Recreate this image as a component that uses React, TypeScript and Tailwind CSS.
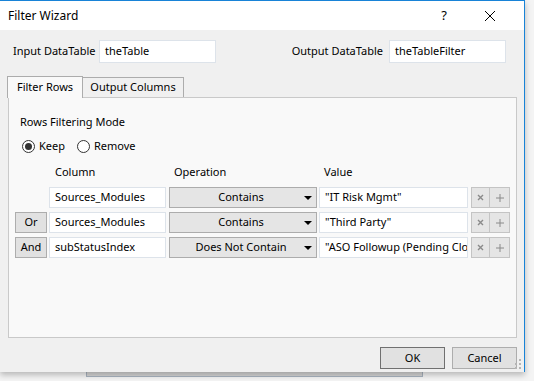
import React from 'react';

type Rule = {
  joiner?: string;
  column: string;
  operation: string;
  value: string;
};

const rules: Rule[] = [
  { column: 'Sources_Modules', operation: 'Contains', value: '"IT Risk Mgmt"' },
  { joiner: 'Or', column: 'Sources_Modules', operation: 'Contains', value: '"Third Party"' },
  { joiner: 'And', column: 'subStatusIndex', operation: 'Does Not Contain', value: '"ASO Followup (Pending Closure)"' },
];

function Radio({ checked, label }: { checked: boolean; label: string }) {
  return (
    <label className="flex items-center gap-[4px]">
      <span className="w-[13px] h-[13px] rounded-full border border-[#333] bg-white flex items-center justify-center">
        {checked && <span className="w-[7px] h-[7px] rounded-full bg-[#333]" />}
      </span>
      <span>{label}</span>
    </label>
  );
}

export default function App() {
  const [mode, setMode] = React.useState('keep');

  return (
    <div className="w-[534px] h-[381px] bg-[#f4f4f4] relative overflow-hidden text-[11px] text-black whitespace-nowrap" style={{ fontFamily: '"Segoe UI", "Noto Sans", sans-serif' }}>
      {/* window behind the dialog */}
      <div className="absolute left-[86px] top-[360px] w-[337px] h-[17px] bg-[#d6d6d6] border border-[#a9b3bf]" />

      <div className="absolute left-0 top-0 w-[525px] h-[372px] flex flex-col bg-[#f0f0f0] border-t border-r border-[#1883d7] shadow-[0_3px_6px_rgba(0,0,0,0.25)]">
        {/* title bar */}
        <div className="h-[29px] bg-white flex items-center pl-[8px] shrink-0 text-[12px]">
          <span className="flex-1">Filter Wizard</span>
          <span className="w-[20px] text-center mr-[30px] text-[13px]">?</span>
          <svg width="12" height="12" viewBox="0 0 12 12" className="mr-[28px]">
            <path d="M1 1 L11 11 M11 1 L1 11" stroke="#000" strokeWidth="1" />
          </svg>
        </div>

        {/* table names */}
        <div className="flex items-center h-[23px] mt-[10px] pl-[13px] pr-[18px]">
          <span className="w-[86px]">Input DataTable</span>
          <div className="w-[117px] h-[23px] bg-white border border-[#dde3ea] flex items-center pl-[5px]">theTable</div>
          <div className="flex-1" />
          <span className="mr-[6px]">Output DataTable</span>
          <div className="w-[117px] h-[23px] bg-white border border-[#dde3ea] flex items-center pl-[5px]">theTableFilter</div>
        </div>

        {/* tabs */}
        <div className="flex items-end h-[22px] mt-[12px] pl-[7px]">
          <div className="h-[22px] w-[76px] bg-[#f9f9f9] border border-b-0 border-[#acacac] flex items-center justify-center relative z-10 -mb-px pb-[1px]">Filter Rows</div>
          <div className="h-[20px] w-[101px] bg-[#f0f0f0] border border-l-0 border-b-0 border-[#acacac] flex items-center justify-center">Output Columns</div>
        </div>
        <div className="ml-[8px] w-[509px] h-[241px] bg-[#f9f9f9] border border-[#c9c9c9] pl-[11px] pt-[15px]">
          <div className="h-[17px] leading-[17px]">Rows Filtering Mode</div>
          <div className="flex items-center gap-[12px] h-[17px] mt-[8px] pl-[2px]">
            <div onClick={() => setMode('keep')}><Radio checked={mode === 'keep'} label="Keep" /></div>
            <div onClick={() => setMode('remove')}><Radio checked={mode === 'remove'} label="Remove" /></div>
          </div>

          <div className="flex h-[17px] mt-[8px] leading-[17px]">
            <span className="w-[154px] pl-[35px]">Column</span>
            <span className="w-[150px]">Operation</span>
            <span>Value</span>
          </div>

          <div className="flex flex-col gap-[4px] mt-[7px] -ml-[5px]">
            {rules.map((r, i) => (
              <div key={i} className="flex items-center h-[21px]">
                {r.joiner ? (
                  <button className="w-[32px] h-[21px] bg-[#e1e1e1] border border-[#adadad] text-center">{r.joiner}</button>
                ) : (
                  <div className="w-[32px]" />
                )}
                <div className="ml-[2px] w-[117px] h-[21px] bg-white border border-[#dde3ea] flex items-center pl-[5px]">{r.column}</div>
                <div className="ml-[3px] w-[148px] h-[21px] bg-[#e5e5e5] border border-[#acacac] flex items-center">
                  <span className="flex-1 text-center pl-[8px]">{r.operation}</span>
                  <svg width="8" height="4" viewBox="0 0 8 4" className="mr-[4px]">
                    <path d="M0 0 L8 0 L4 4 Z" fill="#000" />
                  </svg>
                </div>
                <div className="ml-[2px] w-[149px] h-[21px] bg-white border border-[#dde3ea] flex items-center pl-[5px] overflow-hidden">{r.value}</div>
                <button className="ml-[3px] w-[19px] h-[21px] bg-[#e5e5e5] border border-[#c4c4c4] flex items-center justify-center">
                  <svg width="7" height="7" viewBox="0 0 7 7">
                    <path d="M1 1 L6 6 M6 1 L1 6" stroke="#8a8a8a" strokeWidth="1.4" />
                  </svg>
                </button>
                <button className="w-[20px] h-[21px] bg-[#e5e5e5] border border-l-0 border-[#c4c4c4] flex items-center justify-center">
                  <svg width="8" height="8" viewBox="0 0 8 8">
                    <path d="M4 0 V8 M0 4 H8" stroke="#8a8a8a" strokeWidth="1" />
                  </svg>
                </button>
              </div>
            ))}
          </div>
        </div>

        {/* buttons */}
        <div className="flex justify-end gap-[7px] mt-[9px] pr-[7px] relative">
          <button className="w-[65px] h-[22px] bg-[#e1e1e1] border border-[#707070] shadow-[inset_0_0_0_1px_#e1e1e1]">OK</button>
          <button className="w-[65px] h-[22px] bg-[#e1e1e1] border border-[#adadad]">Cancel</button>
          <svg width="6" height="10" viewBox="0 0 6 10" className="absolute right-[3px] top-[12px]">
            <rect x="4" y="0" width="2" height="2" fill="#b5b5b5" />
            <rect x="4" y="4" width="2" height="2" fill="#b5b5b5" />
            <rect x="0" y="4" width="2" height="2" fill="#b5b5b5" />
            <rect x="4" y="8" width="2" height="2" fill="#b5b5b5" />
            <rect x="0" y="8" width="2" height="2" fill="#b5b5b5" />
          </svg>
        </div>
      </div>
    </div>
  );
}
